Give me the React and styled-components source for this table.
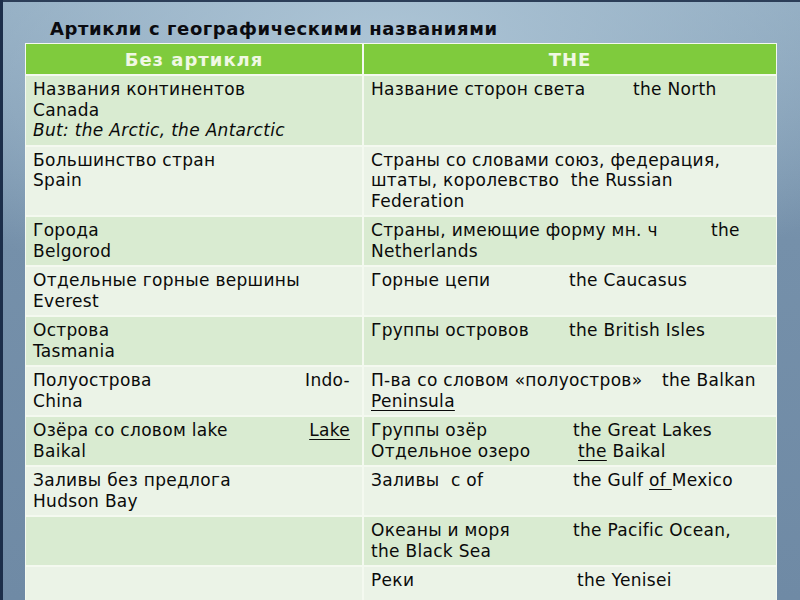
import React from "react";
import styled, { createGlobalStyle } from "styled-components";

const GlobalStyle = createGlobalStyle`
  html, body {
    margin: 0;
    padding: 0;
  }
  body {
    font-family: "DejaVu Sans", "Liberation Sans", sans-serif;
    color: #0a0a0a;
  }
`;

const Page = styled.div`
  width: 800px;
  height: 600px;
  overflow: hidden;
  box-sizing: border-box;
  padding: 18px 0 0 25px;
  background:
    radial-gradient(ellipse 70% 45% at 48% 8%, #adc5d6 0%, rgba(150, 176, 197, 0) 100%),
    linear-gradient(180deg, #8ea9bf 0%, #7590aa 40%, #6f8aa5 100%);
  box-shadow: inset 3px 0 0 #1c2e4a, inset 0 2px 0 #2c3e58;
`;

const Title = styled.h1`
  margin: 0 0 3px 25px;
  font-size: 18px;
  line-height: 22px;
  font-weight: bold;
  letter-spacing: 0.6px;
  color: #0b0b10;
`;

const Table = styled.div`
  display: grid;
  grid-template-columns: 336px 1fr;
  gap: 2px;
  width: 752px;
  box-sizing: border-box;
  padding: 1px;
  background: #f4f9f0;
`;

const HeadCell = styled.div`
  height: 30px;
  display: flex;
  align-items: center;
  justify-content: center;
  background: #7fcb3d;
  color: #f0f8e4;
  font-size: 18px;
  font-weight: bold;
  letter-spacing: 1px;
`;

const Cell = styled.div`
  min-height: 41px;
  padding: 3px ${(p) => (p.$left ? 12 : 7)}px 4px 7px;
  background: ${(p) => (p.$dark ? "#d9ebd1" : "#ebf3e7")};
  font-size: 17px;
  line-height: 20.5px;
  letter-spacing: 0.3px;
`;

const Line = styled.div`
  display: flex;
  justify-content: ${(p) => (p.$spread ? "space-between" : "flex-start")};
  white-space: nowrap;
`;

const Label = styled.span`
  display: inline-block;
  width: ${(p) => p.$w}px;
  flex: none;
`;

const Note = styled.div`
  font-style: italic;
`;

const U = styled.span`
  text-decoration: underline;
  text-underline-offset: 3px;
`;

const rows = [
  {
    left: (
      <>
        <Line>Названия континентов</Line>
        <Line>Canada</Line>
        <Note>But: the Arctic, the Antarctic</Note>
      </>
    ),
    right: (
      <Line>
        <Label $w={262}>Название сторон света</Label>the North
      </Line>
    ),
  },
  {
    left: (
      <>
        <Line>Большинство стран</Line>
        <Line>Spain</Line>
      </>
    ),
    right: (
      <>
        <Line>Страны со словами союз, федерация,</Line>
        <Line>штаты, королевство&nbsp; the Russian</Line>
        <Line>Federation</Line>
      </>
    ),
  },
  {
    left: (
      <>
        <Line>Города</Line>
        <Line>Belgorod</Line>
      </>
    ),
    right: (
      <>
        <Line>
          <Label $w={340}>Страны, имеющие форму мн. ч</Label>the
        </Line>
        <Line>Netherlands</Line>
      </>
    ),
  },
  {
    left: (
      <>
        <Line>Отдельные горные вершины</Line>
        <Line>Everest</Line>
      </>
    ),
    right: (
      <Line>
        <Label $w={198}>Горные цепи</Label>the Caucasus
      </Line>
    ),
  },
  {
    left: (
      <>
        <Line>Острова</Line>
        <Line>Tasmania</Line>
      </>
    ),
    right: (
      <Line>
        <Label $w={198}>Группы островов</Label>the British Isles
      </Line>
    ),
  },
  {
    left: (
      <>
        <Line $spread>
          <span>Полуострова</span>
          <span>Indo-</span>
        </Line>
        <Line>China</Line>
      </>
    ),
    right: (
      <>
        <Line>
          <Label $w={291}>П-ва со словом «полуостров»</Label>the Balkan
        </Line>
        <Line>
          <U>Peninsula</U>
        </Line>
      </>
    ),
  },
  {
    left: (
      <>
        <Line $spread>
          <span>Озёра со словом lake</span>
          <U>Lake</U>
        </Line>
        <Line>Baikal</Line>
      </>
    ),
    right: (
      <>
        <Line>
          <Label $w={202}>Группы озёр</Label>the Great Lakes
        </Line>
        <Line>
          <Label $w={207}>Отдельное озеро</Label>
          <U>the</U>&nbsp;Baikal
        </Line>
      </>
    ),
  },
  {
    left: (
      <>
        <Line>Заливы без предлога</Line>
        <Line>Hudson Bay</Line>
      </>
    ),
    right: (
      <Line>
        <Label $w={202}>Заливы&nbsp; с of</Label>the Gulf&nbsp;<U>of&nbsp;</U>Mexico
      </Line>
    ),
  },
  {
    left: null,
    right: (
      <>
        <Line>
          <Label $w={202}>Океаны и моря</Label>the Pacific Ocean,
        </Line>
        <Line>the Black Sea</Line>
      </>
    ),
  },
  {
    left: null,
    right: (
      <Line>
        <Label $w={206}>Реки</Label>the Yenisei
      </Line>
    ),
  },
];

const App = () => {
  return (
    <Page>
      <GlobalStyle />
      <Title>Артикли с географическими названиями</Title>
      <Table>
        <HeadCell>Без артикля</HeadCell>
        <HeadCell>THE</HeadCell>
        {rows.map((row, i) => (
          <React.Fragment key={i}>
            <Cell $left $dark={i % 2 === 0}>{row.left}</Cell>
            <Cell $dark={i % 2 === 0}>{row.right}</Cell>
          </React.Fragment>
        ))}
      </Table>
    </Page>
  );
};

export default App;
